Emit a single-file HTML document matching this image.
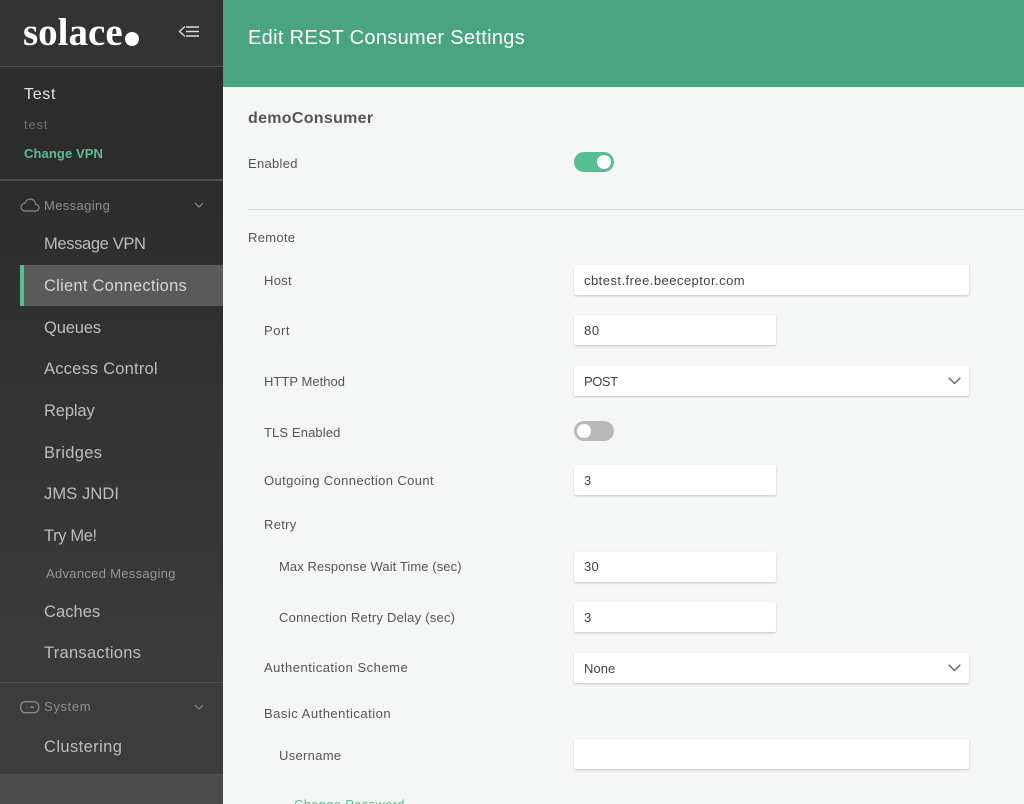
<!DOCTYPE html>
<html lang="en">
<head>
<meta charset="utf-8">
<title>Edit REST Consumer Settings</title>
<style>
html,body{margin:0;padding:0;width:1024px;height:804px;overflow:hidden;background:#f5f7f6}
body{font-family:"Liberation Sans",sans-serif;position:relative}
.a{position:absolute;white-space:nowrap}
#side{position:absolute;left:0;top:0;width:223px;height:804px;background:linear-gradient(180deg,#2b2b2b 0,#2d2d2d 200px,#3c3c3c 700px,#3c3c3c 774px)}
#logo{position:absolute;left:0;top:0;width:223px;height:66px;background:#333}
#foot{position:absolute;left:0;top:775px;width:223px;height:29px;background:#4b4b4b}
.hr{position:absolute;left:0;width:223px;height:1px;background:#505050}
.n{position:absolute;left:44px;font-size:16.5px;line-height:20px;color:#bdbdbd;white-space:nowrap;letter-spacing:.2px}
.g{position:absolute;left:44px;font-size:13px;line-height:16px;color:#8e8e8e;white-space:nowrap;letter-spacing:.37px}
#head{position:absolute;left:223px;top:0;width:801px;height:87px;background:#4aa381}
.l{position:absolute;font-size:13px;line-height:16px;color:#555;white-space:nowrap;letter-spacing:.3px}
.f{position:absolute;left:574px;height:30px;background:#fff;border-radius:2px;box-shadow:0 1px 2px rgba(0,0,0,.2);font-size:13px;line-height:31px;color:#444;text-indent:10px;letter-spacing:.3px;white-space:nowrap}
.w{width:395px}.s{width:202px}
.t{position:absolute;left:574px;width:40px;height:20px;border-radius:10px}
.k{position:absolute;top:3px;width:14px;height:14px;border-radius:50%;background:#fff}
svg{position:absolute;overflow:visible}
</style>
</head>
<body>
<div id="side"></div>
<div id="logo"></div>
<div class="hr" style="top:66px"></div>
<div class="hr" style="top:179px;height:2px"></div>
<div class="hr" style="top:682px"></div>
<div class="hr" style="top:774px"></div>
<div id="foot"></div>

<div class="a" style="left:23px;top:11px;font-family:'Liberation Serif',serif;font-weight:bold;font-size:39px;line-height:44px;color:#fff;letter-spacing:0">solace</div>
<div class="a" style="left:125px;top:32px;width:14px;height:14px;border-radius:50%;background:#fff"></div>
<svg style="left:178px;top:25px" width="22" height="14" fill="none" stroke="#dcdcdc" stroke-width="1.4"><path d="M7 1.500 1.500 6.500 7 11.500M8 2h13M8 6.500h13M8 11h13"/></svg>

<div class="a" style="left:24px;top:85px;font-size:16px;line-height:20px;color:#e4e4e4;letter-spacing:.7px">Test</div>
<div class="a" style="left:24px;top:117px;font-size:13px;line-height:16px;color:#6f6f6f;letter-spacing:.8px">test</div>
<div class="a" style="left:24px;top:146px;font-size:13px;line-height:16px;color:#55bf92;font-weight:bold;letter-spacing:.1px">Change VPN</div>

<svg style="left:20px;top:198px" width="20" height="14" fill="none" stroke="#8a8a8a" stroke-width="1.2"><path d="M5 13h10.500c2 0 3.500-1.500 3.500-3.300 0-1.800-1.400-3.200-3.200-3.300C15.300 3.500 13 1 10.300 1 7.800 1 5.800 2.700 5.200 5 3 5.200 1 7 1 9.300 1 11.500 2.800 13 5 13z"/></svg>
<div class="g" style="top:198px">Messaging</div>
<svg style="left:194px;top:202px" width="10" height="6" fill="none" stroke="#8a8a8a" stroke-width="1.2"><path d="M1 1l4 4 4-4"/></svg>

<div class="n" style="top:234px;letter-spacing:-.35px">Message VPN</div>
<div class="a" style="left:20px;top:265px;width:203px;height:41px;background:#5a5a5a"></div>
<div class="a" style="left:20px;top:265px;width:4px;height:41px;background:#55bf92"></div>
<div class="n" style="top:276px;color:#d4d4d4;letter-spacing:.25px">Client Connections</div>
<div class="n" style="top:318px;letter-spacing:-.13px">Queues</div>
<div class="n" style="top:359px">Access Control</div>
<div class="n" style="top:401px;letter-spacing:-.13px">Replay</div>
<div class="n" style="top:443px;letter-spacing:.35px">Bridges</div>
<div class="n" style="top:484px;letter-spacing:.1px">JMS JNDI</div>
<div class="n" style="top:526px;letter-spacing:-.37px">Try Me!</div>
<div class="a" style="left:46px;top:566px;font-size:13px;line-height:16px;color:#969696;letter-spacing:.3px">Advanced Messaging</div>
<div class="n" style="top:602px;letter-spacing:.05px">Caches</div>
<div class="n" style="top:643px;letter-spacing:.28px">Transactions</div>

<svg style="left:20px;top:701px" width="20" height="13" fill="none" stroke="#8a8a8a" stroke-width="1.3"><rect x=".7" y=".7" width="18" height="11" rx="4.500"/><path d="M6 6.200h.8M10 6.200h4"/></svg>
<div class="g" style="top:699px;letter-spacing:.65px">System</div>
<svg style="left:194px;top:704px" width="10" height="6" fill="none" stroke="#8a8a8a" stroke-width="1.2"><path d="M1 1l4 4 4-4"/></svg>
<div class="n" style="top:737px;letter-spacing:.4px">Clustering</div>

<div id="head"></div>
<div class="a" style="left:248px;top:25px;font-size:20px;line-height:26px;color:#fff;letter-spacing:.31px">Edit REST Consumer Settings</div>

<div class="a" style="left:248px;top:109px;font-size:16px;line-height:19px;color:#555;font-weight:bold;letter-spacing:.3px">demoConsumer</div>
<div class="l" style="left:248px;top:156px">Enabled</div>
<div class="t" style="top:152px;background:#55bf92"><div class="k" style="left:23px"></div></div>
<div class="a" style="left:248px;top:209px;width:776px;height:1px;background:#dcdedd"></div>
<div class="l" style="left:248px;top:230px">Remote</div>

<div class="l" style="left:264px;top:273px">Host</div>
<div class="f w" style="top:265px;letter-spacing:.46px">cbtest.free.beeceptor.com</div>
<div class="l" style="left:264px;top:323px;letter-spacing:.55px">Port</div>
<div class="f s" style="top:315px;letter-spacing:.7px">80</div>
<div class="l" style="left:264px;top:374px;letter-spacing:.03px">HTTP Method</div>
<div class="f w" style="top:366px;letter-spacing:-.45px">POST</div>
<svg style="left:948px;top:377px" width="13" height="8" fill="none" stroke="#666" stroke-width="1.4"><path d="M.7.7 6.500 6.500 12.300.7"/></svg>
<div class="l" style="left:264px;top:425px;letter-spacing:.12px">TLS Enabled</div>
<div class="t" style="top:421px;background:#b9b9b9"><div class="k" style="left:3px"></div></div>
<div class="l" style="left:264px;top:473px;letter-spacing:.38px">Outgoing Connection Count</div>
<div class="f s" style="top:465px">3</div>
<div class="l" style="left:264px;top:517px">Retry</div>
<div class="l" style="left:279px;top:559px;letter-spacing:.09px">Max Response Wait Time (sec)</div>
<div class="f s" style="top:552px;line-height:29px">30</div>
<div class="l" style="left:279px;top:610px;letter-spacing:.23px">Connection Retry Delay (sec)</div>
<div class="f s" style="top:602px">3</div>
<div class="l" style="left:264px;top:660px;letter-spacing:.5px">Authentication Scheme</div>
<div class="f w" style="top:653px;letter-spacing:.05px">None</div>
<svg style="left:948px;top:664px" width="13" height="8" fill="none" stroke="#666" stroke-width="1.4"><path d="M.7.7 6.500 6.500 12.300.7"/></svg>
<div class="l" style="left:264px;top:706px;letter-spacing:.5px">Basic Authentication</div>
<div class="l" style="left:279px;top:748px">Username</div>
<div class="f w" style="top:739px"></div>
<div class="l" style="left:294px;top:797px;color:#55bf92">Change Password</div>
</body>
</html>
